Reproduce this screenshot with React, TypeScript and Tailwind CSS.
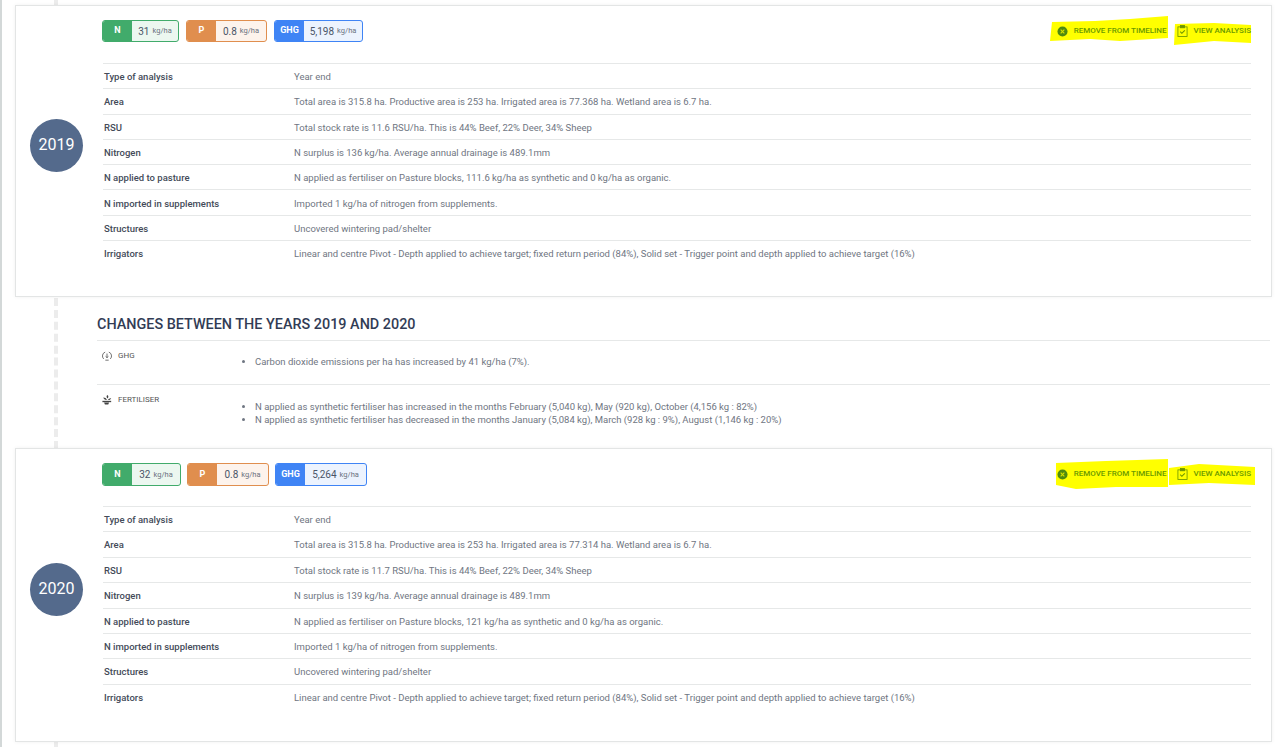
import React from 'react'

const FONT = { fontFamily: '"Roboto", "Liberation Sans", sans-serif' }

interface Pill {
  key: string
  value: string
  label: string
  panel: string
  width: string
}

interface Year {
  year: string
  pills: Pill[]
  area: string
  rsu: string
  nitrogen: string
  pasture: string
  removeBlob: string
  viewBlob: string
  removePos: string
  viewPos: string
  pillHeight: string
  pillGap: string
  rowHeight: string
  className: string
}

const YEARS: Year[] = [
  {
    year: '2019',
    pills: [
      { key: 'N', value: '31', label: 'bg-[#41ab6b]', panel: 'border-[#41ab6b] bg-[#ecf7f0]', width: 'w-[77px]' },
      { key: 'P', value: '0.8', label: 'bg-[#e08e4e]', panel: 'border-[#e08e4e] bg-[#fdf3ec]', width: 'w-[81px]' },
      { key: 'GHG', value: '5,198', label: 'bg-[#3f84f5]', panel: 'border-[#3f84f5] bg-[#ecf3fe]', width: 'w-[89px]' },
    ],
    area: 'Total area is 315.8 ha. Productive area is 253 ha. Irrigated area is 77.368 ha. Wetland area is 6.7 ha.',
    rsu: 'Total stock rate is 11.6 RSU/ha. This is 44% Beef, 22% Deer, 34% Sheep',
    nitrogen: 'N surplus is 136 kg/ha. Average annual drainage is 489.1mm',
    pasture: 'N applied as fertiliser on Pasture blocks, 111.6 kg/ha as synthetic and 0 kg/ha as organic.',
    removeBlob: '2,6 45,5 80,3 118,0 118,22 70,25 40,23 0,25',
    viewBlob: '1,3 40,2 77,4 77,22 40,20 0,24',
    removePos: '-left-[7px] -top-[9px]',
    viewPos: '-left-[3px] -top-[4px]',
    pillHeight: 'h-[22px]',
    pillGap: 'gap-[7px]',
    rowHeight: 'h-[25.3px]',
    className: 'mt-[5px] h-[292px]',
  },
  {
    year: '2020',
    pills: [
      { key: 'N', value: '32', label: 'bg-[#41ab6b]', panel: 'border-[#41ab6b] bg-[#ecf7f0]', width: 'w-[79px]' },
      { key: 'P', value: '0.8', label: 'bg-[#e08e4e]', panel: 'border-[#e08e4e] bg-[#fdf3ec]', width: 'w-[82px]' },
      { key: 'GHG', value: '5,264', label: 'bg-[#3f84f5]', panel: 'border-[#3f84f5] bg-[#ecf3fe]', width: 'w-[92px]' },
    ],
    area: 'Total area is 315.8 ha. Productive area is 253 ha. Irrigated area is 77.314 ha. Wetland area is 6.7 ha.',
    rsu: 'Total stock rate is 11.7 RSU/ha. This is 44% Beef, 22% Deer, 34% Sheep',
    nitrogen: 'N surplus is 139 kg/ha. Average annual drainage is 489.1mm',
    pasture: 'N applied as fertiliser on Pasture blocks, 121 kg/ha as synthetic and 0 kg/ha as organic.',
    removeBlob: '0,4 50,2 112,0 112,28 60,28 20,30 0,26',
    viewBlob: '0,5 30,1 86,4 86,22 40,20 0,22',
    removePos: '-left-[1px] -top-[9px]',
    viewPos: '-left-[8px] -top-[5px]',
    pillHeight: 'h-[23px]',
    pillGap: 'gap-[6px]',
    rowHeight: 'h-[25.4px]',
    className: 'h-[294px]',
  },
]

const IRRIGATORS =
  'Linear and centre Pivot - Depth applied to achieve target; fixed return period (84%), Solid set - Trigger point and depth applied to achieve target (16%)'

function Blob({ points, w, h, className }: { points: string; w: number; h: number; className: string }) {
  return (
    <svg viewBox={`0 0 ${w} ${h}`} width={w} height={h} className={`absolute ${className}`}>
      <polygon points={points} fill="#ffff00" />
    </svg>
  )
}

function RemoveIcon() {
  return (
    <svg viewBox="0 0 12 12" className="relative w-[11px] h-[11px] shrink-0">
      <circle cx="6" cy="6" r="5.5" fill="#4f8a10" />
      <path d="M4 4l4 4M8 4l-4 4" stroke="#d8e000" strokeWidth="1.2" />
    </svg>
  )
}

function ClipboardIcon() {
  return (
    <svg viewBox="0 0 12 13" fill="none" stroke="#6b9400" strokeWidth="0.9" className="relative w-[11px] h-[12px] shrink-0">
      <rect x="1" y="2" width="10" height="10.500" />
      <rect x="3.800" y="0.500" width="4.400" height="2.500" fill="#6b9400" />
      <path d="M3.500 7.200l1.800 1.800 3.200-3.200" strokeWidth="1.200" />
    </svg>
  )
}

function GhgIcon() {
  return (
    <svg viewBox="0 0 12 12" fill="none" stroke="#555" strokeWidth="1" className="w-[10px] h-[10px] shrink-0">
      <path d="M2 9.500A5 5 0 0 1 3.800 1.300M8.200 1.300A5 5 0 0 1 10 9.500M4 11h4" />
      <path d="M6 3v5M4.300 6.400L6 8l1.700-1.600" />
    </svg>
  )
}

function FertiliserIcon() {
  return (
    <svg viewBox="0 0 12 12" className="w-[10px] h-[10px] shrink-0" fill="#444">
      <path d="M6.500 0c1.400 1 1.500 2.800.2 4.200C5.300 3 5 1.300 6.500 0z" />
      <path d="M1.500 3c2.200 0 3.800 1 4.400 3-2.200.2-3.800-1-4.400-3zM11 3.800c-.5 1.500-1.800 2.400-3.800 2.200.6-1.500 2-2.400 3.800-2.200z" />
      <rect x="0.500" y="7" width="10.500" height="1.600" />
      <path d="M2.500 9h6l-1 2.500h-4z" />
    </svg>
  )
}

function YearCard({ data }: { data: Year }) {
  const rows: [string, string][] = [
    ['Type of analysis', 'Year end'],
    ['Area', data.area],
    ['RSU', data.rsu],
    ['Nitrogen', data.nitrogen],
    ['N applied to pasture', data.pasture],
    ['N imported in supplements', 'Imported 1 kg/ha of nitrogen from supplements.'],
    ['Structures', 'Uncovered wintering pad/shelter'],
    ['Irrigators', IRRIGATORS],
  ]

  return (
    <div className={`relative flex bg-white border border-[#e3e5e5] shadow-[0_0_4px_rgba(0,0,0,0.06)] ml-[15px] w-[1257px] ${data.className}`}>
      <div className="w-[87px] shrink-0 flex items-center pl-[14px] pb-[12px]">
        <div className="w-[53px] h-[53px] rounded-full bg-[#546a8c] flex items-center justify-center text-white text-[16px]">
          {data.year}
        </div>
      </div>
      <div className="w-[1148px] pt-[14px]">
        <div className="flex items-start justify-between h-[43px]">
          <div className={`flex -ml-px ${data.pillGap}`}>
            {data.pills.map((p) => (
              <div key={p.key} className={`flex rounded-[3px] overflow-hidden border ${data.pillHeight} ${p.panel} ${p.width}`}>
                <div className={`w-[29px] shrink-0 flex items-center justify-center text-white text-[9px] font-bold ${p.label}`}>
                  {p.key}
                </div>
                <div className="flex-1 flex items-center justify-center gap-[3px] text-[#4a5568] text-[10px]">
                  {p.value}
                  <span className="text-[7.5px] text-[#6b7280]">kg/ha</span>
                </div>
              </div>
            ))}
          </div>
          <div className="flex items-center gap-[10px] pt-[5px] text-[8px] font-medium text-[#6b9a00] uppercase">
            <div className="relative flex items-center gap-[6px]">
              <Blob points={data.removeBlob} w={118} h={30} className={data.removePos} />
              <RemoveIcon />
              <span className="relative">Remove from timeline</span>
            </div>
            <div className="relative flex items-center gap-[6px]">
              <Blob points={data.viewBlob} w={86} h={24} className={data.viewPos} />
              <ClipboardIcon />
              <span className="relative">View analysis</span>
            </div>
          </div>
        </div>
        <div>
          {rows.map(([label, text]) => (
            <div key={label} className={`flex items-center pt-[2px] border-t border-[#e6e8e8] text-[9.5px] ${data.rowHeight}`}>
              <div className="w-[191px] shrink-0 pl-px font-medium text-[#444b59]">{label}</div>
              <div className="text-[#6f7682]">{text}</div>
            </div>
          ))}
        </div>
      </div>
    </div>
  )
}

function Changes() {
  return (
    <div className="h-[151px] ml-[97px] w-[1173px]">
      <div className="h-[44px] flex items-end pb-[4px] border-b border-[#e6e8e8] text-[14.4px] font-medium text-[#323c55]">
        CHANGES BETWEEN THE YEARS 2019 AND 2020
      </div>
      <div className="h-[44px] border-b border-[#e6e8e8] relative text-[9.5px] text-[#6f7682]">
        <div className="flex items-center gap-[6px] pl-[5px] pt-[9px] text-[8px] text-[#555]">
          <GhgIcon />
          GHG
        </div>
        <ul className="absolute left-[146px] top-[14px] list-disc pl-[12px]">
          <li>Carbon dioxide emissions per ha has increased by 41 kg/ha (7%).</li>
        </ul>
      </div>
      <div className="relative text-[9.5px] text-[#6f7682]">
        <div className="flex items-center gap-[6px] pl-[5px] pt-[9px] text-[8px] text-[#555]">
          <FertiliserIcon />
          FERTILISER
        </div>
        <ul className="absolute left-[146px] top-[15px] list-disc pl-[12px] leading-[13px]">
          <li>N applied as synthetic fertiliser has increased in the months February (5,040 kg), May (920 kg), October (4,156 kg : 82%)</li>
          <li>N applied as synthetic fertiliser has decreased in the months January (5,084 kg), March (928 kg : 9%), August (1,146 kg : 20%)</li>
        </ul>
      </div>
    </div>
  )
}

export default function App() {
  return (
    <div style={FONT} className="relative h-[747px] w-[1279px] overflow-hidden bg-white border-l-2 border-[#d3d8d8]">
      <div className="absolute left-[52px] top-0 h-full border-l-4 border-dashed border-[#ececec]" />
      <div className="relative -ml-[2px]">
        <YearCard data={YEARS[0]} />
        <Changes />
        <YearCard data={YEARS[1]} />
      </div>
    </div>
  )
}
